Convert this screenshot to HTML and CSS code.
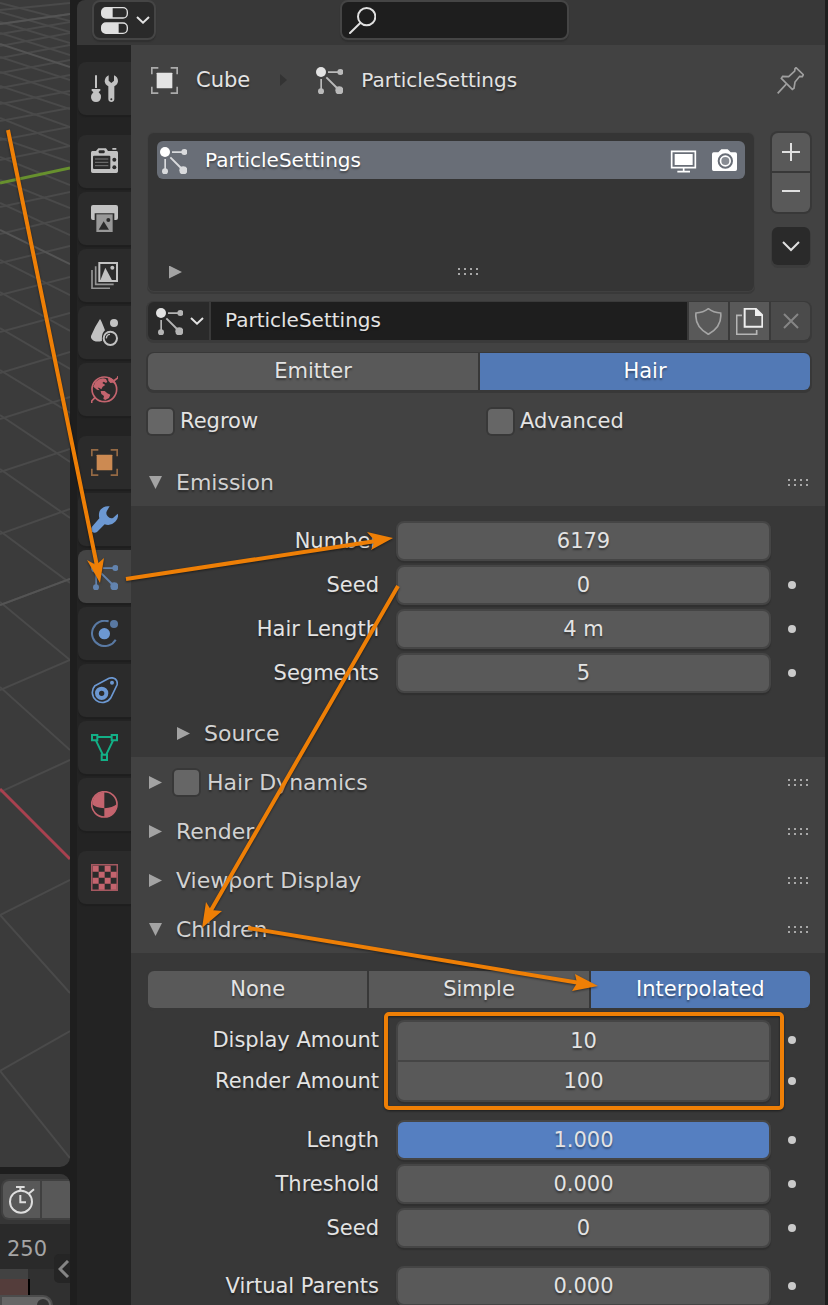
FILE: index.html
```html
<!DOCTYPE html>
<html lang="en">
<head>
<meta charset="utf-8">
<meta name="viewport" content="width=device-width, initial-scale=1">
<title>Particle properties</title>
<link rel="stylesheet" href="styles.css">
</head>
<body>
<svg class="defs" aria-hidden="true">
  <symbol id="i-object" viewBox="0 0 81 81"><path d="M2 22V2H22M59 2H79V22M79 59V79H59M22 79H2V59" fill="none" stroke="currentColor" stroke-width="6" opacity=".65"/><rect x="17" y="17" width="47" height="47" rx="2" fill="currentColor"/></symbol>
  <symbol id="i-particles" viewBox="0 0 81 81"><g fill="currentColor"><circle cx="15" cy="15" r="15"/><g opacity=".75"><circle cx="73" cy="15" r="9"/><circle cx="15" cy="73" r="9"/><circle cx="70" cy="70" r="12"/><path d="M36 13H66V18H36ZM13 36H18V66H13ZM29 33L33 29 65 61 61 65Z"/></g></g></symbol>
  <symbol id="i-chevron" viewBox="0 0 40 24"><path d="M2 3L20 20 38 3" fill="none" stroke="currentColor" stroke-width="6"/></symbol>
</svg>

<div class="app">
  <div class="left">
    <section class="viewport" aria-label="3D viewport">
      <svg width="70" height="1167" viewBox="0 0 70 1167" aria-hidden="true">
        <g fill="none" stroke="#4a4a4a" stroke-width="2">
          <path d="M0 10L70 3M0 24L70 14M0 34L70 22M0 46L70 33M0 58L70 45M0 73L70 60M0 88L70 75M0 104L70 91M0 121L70 108M0 140L70 127M0 160L70 146M0 207L70 192M0 234L70 217M0 263L70 246M0 295L70 277M0 332L70 313M0 373L70 352M0 419L70 397M0 472L70 449M0 534L70 509M0 605L70 579M0 690L70 660M0 792L70 760M0 915L70 880M0 1071L70 1031"/>
          <path d="M0 3L70 21M0 12L70 32M0 22L70 43M0 33L70 55M0 57L70 80M0 72L70 95M0 86L70 109M0 102L70 127M0 118L70 146M0 138L70 162M0 157L70 185M0 180L70 208M0 203L70 235M0 260L70 295M0 292L70 331M0 328L70 369M0 370L70 413M0 415L70 462M0 469L70 518M0 531L70 583M0 602L70 660M0 687L70 750M0 915L70 993M0 1071L70 1158"/>
        </g>
        <path d="M0 24L70 14M0 44L70 67M0 230L70 264M0 605L70 579" fill="none" stroke="#545454" stroke-width="2"/>
        <path d="M0 183L70 168" stroke="#67902e" stroke-width="3"/>
        <path d="M0 789L70 859" stroke="#a8414f" stroke-width="3"/>
      </svg>
    </section>
    <section class="timeline" aria-label="Timeline">
      <div class="timeline-head">
        <button class="clock" aria-label="Playback range"><svg width="27" height="28" viewBox="0 0 81 84"><g fill="none" stroke="#dedede" stroke-width="6"><circle cx="39" cy="47" r="33"/><path d="M24 3H50M37 3V14M61 24L78 10M37 27V49H54"/></g></svg></button>
        <button class="frame-field" aria-label="Start frame"></button>
      </div>
      <div class="scrub">250</div>
      <div class="track"><span class="range"></span></div>
      <div class="scrollbar"><span></span></div>
      <button class="side-tab" aria-label="Show sidebar"><svg width="12" height="18" viewBox="0 0 12 18"><path d="M10 1L2 9 10 17" fill="none" stroke="#858585" stroke-width="3"/></svg></button>
    </section>
  </div>

  <main class="editor">
    <header class="topbar">
      <button class="editor-type" aria-label="Editor type">
        <svg width="27" height="27" viewBox="0 0 81 81"><g fill="none" stroke="#e0e0e0" stroke-width="4"><rect x="2" y="2" width="77" height="31" rx="13"/><rect x="2" y="48" width="77" height="31" rx="13"/></g><path d="M15 2H35V33H15Q2 33 2 20V15Q2 2 15 2ZM15 48H53V79H15Q2 79 2 66V61Q2 48 15 48Z" fill="#e0e0e0"/></svg>
        <svg width="14" height="8"><use href="#i-chevron"/></svg>
      </button>
      <label class="search">
        <svg width="27" height="27" viewBox="0 0 81 81" aria-hidden="true"><circle cx="53" cy="29" r="26" fill="none" stroke="#e0e0e0" stroke-width="6"/><path d="M33 49L3 78" stroke="#e0e0e0" stroke-width="6" stroke-linecap="round"/></svg>
        <input type="text" aria-label="Search">
      </label>
    </header>

    <div class="workarea">
      <nav class="tabs" aria-label="Property tabs">
        <button class="tab gap-after" aria-label="Tool"><svg viewBox="0 0 81 81"><g fill="currentColor"><path d="M12 1H18V39H12ZM2 42H28V47L23 51H7L2 47Z"/><path d="M8 50H22Q31 58 30 67Q29 81 15 81Q1 81 0 67Q0 58 8 50Z"/><path d="M53 1V17L61 24 69 17V1Q81 6 81 19Q80 29 70 34V73Q69 81 61 81Q53 81 52 73V34Q42 29 41 19Q42 6 53 1Z"/></g><circle cx="61" cy="73" r="3" fill="#2b2b2b"/></svg></button>
        <button class="tab" aria-label="Render"><svg viewBox="0 0 81 81"><path d="M4 9H15L22 1H45L51 9H77Q81 9 81 14V70Q81 75 76 75H5Q0 75 0 70V14Q0 9 4 9ZM64 0H76V5H64Z" fill="currentColor"/><g fill="#2b2b2b"><rect x="23" y="7" width="18" height="9" rx="3"/><rect x="6" y="23" width="52" height="40" rx="3"/><circle cx="70" cy="35" r="6"/><circle cx="70" cy="58" r="6"/></g><path d="M12 33H52M12 43H52M12 53H52" stroke="currentColor" stroke-width="3" opacity=".5"/></svg></button>
        <button class="tab" aria-label="Output"><svg viewBox="0 0 81 81"><path d="M6 0H75Q81 0 81 6V39Q81 45 75 45H70V25H11V45H6Q0 45 0 39V6Q0 0 6 0Z" fill="currentColor"/><path d="M16 28H65V81H16Z" fill="currentColor" opacity=".72"/><circle cx="52" cy="45" r="6" fill="#2b2b2b"/><path d="M23 74L38 49 54 74Z" fill="#2b2b2b"/></svg></button>
        <button class="tab" aria-label="View layer"><svg viewBox="0 0 81 81"><g fill="none" stroke="currentColor"><rect x="25" y="3" width="53" height="54" stroke-width="6"/><path d="M14 13V67H68M3 24V79H57" stroke-width="5" opacity=".7"/></g><path d="M28 55L43 17 63 55Z" fill="currentColor"/><circle cx="64" cy="17" r="6" fill="currentColor"/></svg></button>
        <button class="tab" aria-label="Scene"><svg viewBox="0 0 81 81"><path d="M27 0Q30 2 42 34Q31 43 33 65Q21 70 8 65Q-2 60 0 51Q12 22 27 0Z" fill="currentColor"/><circle cx="69" cy="12" r="12" fill="currentColor"/><circle cx="58" cy="58" r="20" fill="none" stroke="currentColor" stroke-width="6"/><path d="M46 58Q47 46 57 46" fill="none" stroke="currentColor" stroke-width="4"/></svg></button>
        <button class="tab red gap-after" aria-label="World"><svg viewBox="0 0 81 81"><g fill="none" stroke="currentColor" stroke-width="5"><circle cx="40" cy="40" r="37"/><path d="M2 81V75L12 65M81 0V5L68 15"/></g><path d="M13 18Q29 2 45 9L49 17 45 21 38 17 34 21 43 27 35 32 31 40 24 35 20 35 26 43 18 41 7 32ZM29 45H41L49 52 58 56 54 66 43 72 37 69 39 60 31 54ZM51 2Q72 7 76 29L66 20 58 21 52 14Z" fill="currentColor"/></svg></button>
        <button class="tab orange" aria-label="Object"><svg><use href="#i-object"/></svg></button>
        <button class="tab blue" aria-label="Modifiers"><svg viewBox="0 0 81 81"><path d="M56 1Q36-2 26 15Q22 25 25 37L3 62Q-2 69 3 77Q10 83 18 78L41 55Q60 61 74 46Q84 34 80 23L67 35Q58 40 50 31Q43 23 48 14Z" fill="currentColor"/></svg></button>
        <button class="tab blue active" aria-label="Particles"><svg><use href="#i-particles"/></svg></button>
        <button class="tab blue" aria-label="Physics"><svg viewBox="0 0 81 81"><circle cx="40" cy="41" r="17" fill="currentColor"/><g opacity=".72"><circle cx="69" cy="12" r="12" fill="currentColor"/><path d="M53 4A38 38 0 1 0 74 59" fill="none" stroke="currentColor" stroke-width="6"/></g></svg></button>
        <button class="tab blue" aria-label="Constraints"><svg viewBox="0 0 81 81"><g fill="none" stroke="currentColor"><circle cx="32" cy="49" r="14" stroke-width="12"/><path d="M12 26L54 4Q65 0 73 6Q81 13 78 24L59 63A30 30 0 1 1 12 26Z" stroke-width="5"/></g><circle cx="63" cy="17" r="6" fill="currentColor"/></svg></button>
        <button class="tab green" aria-label="Object data"><svg viewBox="0 0 81 81"><path d="M3 3H19V19H3ZM62 3H78V19H62ZM32 62H48V78H32ZM20 9H61M15 20L35 61M66 20L46 61" fill="none" stroke="currentColor" stroke-width="6"/></svg></button>
        <button class="tab red gap-after" aria-label="Material"><svg viewBox="0 0 81 81"><circle cx="40" cy="40" r="38" fill="none" stroke="currentColor" stroke-width="5"/><path d="M40 2V52Q13 50 4 40Q4 8 40 2ZM40 52Q65 50 77 40Q75 75 40 79Z" fill="currentColor"/></svg></button>
        <button class="tab red" aria-label="Texture"><svg viewBox="0 0 81 81"><rect x="2" y="2" width="77" height="77" fill="none" stroke="currentColor" stroke-width="5" opacity=".8"/><path d="M5 5H23V23H5ZM41 5H59V23H41ZM23 23H41V41H23ZM59 23H77V41H59ZM5 41H23V59H5ZM41 41H59V59H41ZM23 59H41V77H23ZM59 59H77V77H59Z" fill="currentColor"/></svg></button>
      </nav>

      <div class="panels">
        <div class="crumbs">
          <svg class="icon"><use href="#i-object"/></svg><span class="crumb-name">Cube</span>
          <span class="crumb-sep"></span>
          <svg class="icon"><use href="#i-particles"/></svg><span class="crumb-name name">ParticleSettings</span>
          <button class="pin" aria-label="Pin"><svg class="icon" viewBox="0 0 81 81"><path d="M57 2L79 23 76 29 68 28 54 45 51 64 46 67 13 34 17 28 35 29 53 12 54 5ZM27 52L2 79" fill="none" stroke="#a0a0a0" stroke-width="5"/></svg></button>
        </div>

        <section class="slots">
          <div class="slot-list">
            <div class="slot">
              <svg class="icon"><use href="#i-particles"/></svg><span class="slot-name name">ParticleSettings</span>
              <button aria-label="Show in viewport"><svg class="icon" viewBox="0 0 81 81"><path d="M5 13H76V62H5ZM41 64V71M22 74H60" fill="none" stroke="currentColor" stroke-width="5"/><rect x="14" y="21" width="54" height="33" fill="currentColor"/></svg></button>
              <button aria-label="Show in render"><svg class="icon" viewBox="0 0 81 81"><path d="M8 16H22L31 7H50L59 16H73Q78 16 78 21V67Q78 72 73 72H8Q3 72 3 67V21Q3 16 8 16Z" fill="currentColor"/><circle cx="43" cy="42" r="20" fill="none" stroke="#696e77" stroke-width="6"/><circle cx="43" cy="42" r="12" fill="#696e77" fill-opacity=".8"/></svg></button>
            </div>
            <div class="slot-foot"><button class="tri right" aria-label="Filter"></button><span class="grip"></span></div>
          </div>
          <div class="slot-tools">
            <button class="add" aria-label="Add slot"><svg width="18" height="18"><path d="M9 0V18M0 9H18" stroke="#e0e0e0" stroke-width="2"/></svg></button>
            <button class="remove" aria-label="Remove slot"><svg width="18" height="18"><path d="M0 9H18" stroke="#e0e0e0" stroke-width="2"/></svg></button>
            <button class="specials" aria-label="Specials"><svg width="18" height="12" viewBox="0 0 18 12"><path d="M1 2L9 10 17 2" fill="none" stroke="#e0e0e0" stroke-width="2"/></svg></button>
          </div>
        </section>

        <div class="datablock">
          <button class="browse" aria-label="Browse settings"><svg class="icon"><use href="#i-particles"/></svg><svg width="14" height="8"><use href="#i-chevron"/></svg></button>
          <input class="name" type="text" value="ParticleSettings" aria-label="Settings name">
          <button aria-label="Fake user"><svg class="icon" viewBox="0 0 81 81"><path d="M40 2Q55 14 77 15Q82 56 40 79Q-2 56 3 15Q25 14 40 2Z" fill="none" stroke="#a5a5a5" stroke-width="5"/></svg></button>
          <button aria-label="New copy"><svg class="icon" viewBox="0 0 81 81"><path d="M18 22H2V79H62V66" fill="none" stroke="#b5b5b5" stroke-width="5"/><path d="M26 2H59L79 22V56H26Z" fill="none" stroke="#eee" stroke-width="6"/><path d="M57 0L81 24H57Z" fill="#eee"/></svg></button>
          <button class="unlink" aria-label="Unlink"><svg width="18" height="18"><path d="M2 2L16 16M16 2L2 16" stroke="#858585" stroke-width="2"/></svg></button>
        </div>

        <div class="choice two">
          <button>Emitter</button><button class="on">Hair</button>
        </div>
        <div class="checks">
          <label><input type="checkbox"><span>Regrow</span></label>
          <label><input type="checkbox"><span>Advanced</span></label>
        </div>

        <section>
          <div class="panel-head"><button><span class="tri down"></span>Emission</button><span class="grip"></span></div>
          <div class="panel-body emission">
            <div class="rows">
              <div class="row"><label for="number">Number</label><input id="number" type="text" value="6179"></div>
              <div class="row"><label for="seed">Seed</label><input id="seed" type="text" value="0"><button class="dot" aria-label="Animate Seed"></button></div>
              <div class="row"><label for="hair-length">Hair Length</label><input id="hair-length" type="text" value="4 m"><button class="dot" aria-label="Animate Hair Length"></button></div>
              <div class="row"><label for="segments">Segments</label><input id="segments" type="text" value="5"><button class="dot" aria-label="Animate Segments"></button></div>
            </div>
            <div class="panel-head sub"><button><span class="tri right"></span>Source</button></div>
          </div>
        </section>
        <section class="panel-head"><button aria-label="Expand Hair Dynamics"><span class="tri right"></span></button><label class="head-check"><input type="checkbox"><span>Hair Dynamics</span></label><span class="grip"></span></section>
        <section class="panel-head"><button><span class="tri right"></span>Render</button><span class="grip"></span></section>
        <section class="panel-head"><button><span class="tri right"></span>Viewport Display</button><span class="grip"></span></section>
        <section>
          <div class="panel-head"><button><span class="tri down"></span>Children</button><span class="grip"></span></div>
          <div class="panel-body children">
            <div class="choice three">
              <button>None</button><button>Simple</button><button class="on">Interpolated</button>
            </div>
            <div class="rows joined">
              <div class="row"><label for="display-amount">Display Amount</label><input id="display-amount" type="text" value="10"><button class="dot" aria-label="Animate Display Amount"></button></div>
              <div class="row"><label for="render-amount">Render Amount</label><input id="render-amount" type="text" value="100"><button class="dot" aria-label="Animate Render Amount"></button></div>
            </div>
            <div class="rows">
              <div class="row"><label for="length">Length</label><input id="length" class="full" type="text" value="1.000"><button class="dot" aria-label="Animate Length"></button></div>
              <div class="row"><label for="threshold">Threshold</label><input id="threshold" type="text" value="0.000"><button class="dot" aria-label="Animate Threshold"></button></div>
              <div class="row"><label for="child-seed">Seed</label><input id="child-seed" type="text" value="0"><button class="dot" aria-label="Animate child Seed"></button></div>
            </div>
            <div class="rows">
              <div class="row"><label for="virtual-parents">Virtual Parents</label><input id="virtual-parents" type="text" value="0.000"><button class="dot" aria-label="Animate Virtual Parents"></button></div>
            </div>
          </div>
        </section>
      </div>
    </div>
  </main>

  <svg class="annotations" width="828" height="1305" viewBox="0 0 828 1305" aria-hidden="true">
    <g stroke="#ee7f06" stroke-width="4" fill="none">
      <path d="M8 130L97 566M126 579L376 541M398 586L210 912M248 928L580 983"/>
      <rect x="386" y="1014" width="396" height="94" rx="3"/>
    </g>
    <path d="M100 583L87 560 96 565 104 558ZM393 538L371 550 375 541 367 532ZM202 928L206 902 211 910 222 911ZM598 986L572 991 577 983 575 974Z" fill="#ee7f06"/>
  </svg>
</div>
</body>
</html>
```

FILE: styles.css
```css
* { box-sizing: border-box; }

body {
  margin: 0;
  background: #1e1e1e;
  color: #e3e3e3;
  font: 21px/26px "DejaVu Sans", sans-serif;
}

button, input { font: inherit; color: inherit; }
button { padding: 0; border: 0; background: none; }
svg { display: block; flex: none; }
.defs { position: absolute; width: 0; height: 0; }
.icon { width: 27px; height: 27px; }

.app {
  position: relative;
  display: flex;
  gap: 7px;
  height: 100vh;
  padding-right: 3px;
  overflow: hidden;
}

.annotations {
  position: absolute;
  top: 0;
  left: 0;
  pointer-events: none;
  filter: drop-shadow(0 1px 1px rgba(0, 0, 0, .5));
}

/* Viewport and timeline */
.left { flex: 0 0 70px; display: flex; flex-direction: column; gap: 7px; }
.viewport { flex: 1; min-height: 0; overflow: hidden; background: #3b3b3b; border-radius: 0 0 10px 0; }
.timeline {
  position: relative;
  flex: 0 0 131px;
  overflow: hidden;
  background: #303030;
  border-radius: 0 10px 0 0;
}
.timeline-head { display: flex; gap: 2px; height: 50px; padding: 7px 0 6px 3px; background: #363636; }
.timeline-head button { background: #585858; box-shadow: 0 0 0 2px #404040; }
.clock { width: 37px; display: grid; place-items: center; border-radius: 6px 0 0 6px; }
.frame-field { flex: 1; }
.scrub { height: 45px; padding: 12px 0 0 7px; background: #2a2a2a; color: #a5a5a5; }
.track { height: 26px; padding-top: 10px; background: linear-gradient(#424242, #424242) 0 0 / 28px 100% no-repeat #303030; }
.range { display: block; width: 30px; height: 16px; background: #543d3b; border-right: 2px solid #000; }
.scrollbar { width: 53px; height: 20px; background: #666; border: 2px solid #4c4c4c; border-radius: 0 10px 10px 0; }
.scrollbar span { display: block; width: 12px; height: 12px; margin: 2px 0 0 35px; border-radius: 6px; background: #333; }
.side-tab {
  position: absolute;
  right: 0;
  top: 80px;
  width: 16px;
  height: 29px;
  display: grid;
  place-items: center end;
  background: #252525;
  border-radius: 5px 0 0 5px;
}

/* Editor header */
.editor { flex: 1; min-width: 0; display: flex; flex-direction: column; }
.topbar {
  display: flex;
  gap: 184px;
  flex: 0 0 45px;
  padding: 0 15px;
  background: #383838;
  border-radius: 8px 0 0 0;
}
.editor-type, .search {
  height: 40px;
  border: 2px solid #454545;
  border-radius: 8px;
  display: flex;
  align-items: center;
  box-shadow: 0 2px 1px #303030;
}
.editor-type { width: 64px; gap: 8px; padding-left: 7px; background: #2a2a2a; }
.search { width: 229px; padding-left: 7px; background: #1e1e1e; }
.search input { flex: 1; min-width: 0; border: 0; outline: 0; background: none; }

/* Tabs */
.workarea { flex: 1; min-height: 0; display: flex; }
.tabs { flex: 0 0 54px; display: flex; flex-direction: column; gap: 4px; padding: 17px 0 0 1px; background: #232323; }
.tab {
  flex: 0 0 53px;
  padding-left: 13px;
  background: #2b2b2b;
  border-radius: 8px 0 0 8px;
  box-shadow: 0 2px 1px #1f1f1f;
  color: #c2c2c2;
}
.tab svg { width: 27px; height: 27px; }
.gap-after { margin-bottom: 16px; }
.tab.active { background: #444; }
.red { color: #c4646e; }
.orange { color: #cc8a52; }
.blue { color: #6c98d2; }
.green { color: #13b087; }

/* Panels */
.panels {
  flex: 1;
  min-width: 0;
  background: #424242;
  text-shadow: 0 2px 2px rgba(0, 0, 0, .4);
}
.name { font-size: 20px; }
.crumbs { display: flex; align-items: center; height: 70px; padding: 0 21px 0 20px; }
.crumb-name { margin-left: 18px; }
.crumb-sep {
  margin: 0 29px 0 30px;
  border: solid transparent;
  border-width: 6px 0 6px 7px;
  border-left-color: #333;
}
.pin { margin-left: auto; }

.slots { display: flex; gap: 18px; margin: 18px 15px 0 17px; }
.slot-list {
  flex: 1;
  height: 158px;
  padding: 8px 9px;
  display: flex;
  flex-direction: column;
  background: #353535;
  border-radius: 6px;
  box-shadow: 0 0 0 1px #404040, 0 2px 0 1px #393939;
}
.slot {
  display: flex;
  align-items: center;
  height: 38px;
  padding: 0 7px 0 3px;
  background: #696e77;
  border-radius: 6px;
  color: #fff;
}
.slot-name { flex: 1; margin-left: 18px; }
.slot button + button { margin-left: 14px; }
.slot-foot { margin-top: auto; height: 22px; display: grid; grid-template-columns: 1fr auto 1fr; align-items: center; padding-left: 12px; }
.slot-foot .grip { margin-left: 24px; }

.slot-tools { width: 38px; display: flex; flex-direction: column; }
.slot-tools button { height: 38px; display: grid; place-items: center; background: #595959; box-shadow: 0 0 0 2px #383838; }
.slot-tools .add { border-radius: 6px 6px 0 0; }
.slot-tools .remove { height: 39px; margin-top: 2px; padding-bottom: 3px; border-radius: 0 0 6px 6px; }
.slot-tools .specials { margin-top: 15px; background: #2a2a2a; border-radius: 6px; box-shadow: 0 2px 0 1px #3c3c3c; }

.datablock { display: flex; gap: 2px; height: 38px; margin: 11px 15px 0 17px; background: #3a3a3a; border-radius: 6px; box-shadow: 0 1px 0 2px #3a3a3a; }
.datablock button { flex: 0 0 39px; display: grid; place-items: center; background: #595959; }
.datablock .browse { flex-basis: 61px; display: flex; align-items: center; gap: 7px; padding-left: 8px; background: #2a2a2a; border-radius: 6px 0 0 6px; }
.datablock input { flex: 1; min-width: 0; padding: 0 14px 2px; border: 0; background: #1e1e1e; text-shadow: inherit; }
.datablock .unlink { background: #4b4b4b; border-radius: 0 6px 6px 0; }

.choice { display: grid; gap: 2px; height: 37px; background: #383838; border-radius: 6px; box-shadow: 0 1px 0 2px #383838; }
.choice button { padding-bottom: 2px; background: #595959; text-shadow: inherit; }
.choice button:first-child { border-radius: 6px 0 0 6px; }
.choice button:last-child { border-radius: 0 6px 6px 0; }
.choice .on { background: #5279b5; color: #fff; }
.two { grid-template-columns: 1fr 1fr; margin: 13px 15px 0 17px; }
.three { grid-template-columns: 1fr 1fr 1fr; margin-bottom: 12px; }

input[type="checkbox"] {
  appearance: none;
  flex: none;
  width: 25px;
  height: 25px;
  margin: 0;
  background: #666;
  border-radius: 4px;
  box-shadow: 0 0 0 2px #383838;
}
.checks { display: grid; grid-template-columns: 340px 1fr; margin: 17px 15px 0 17px; height: 50px; }
.checks label, .head-check { display: flex; gap: 7px; }
.checks label { height: 28px; align-items: center; }

.panel-head { display: flex; align-items: center; height: 49px; padding: 2px 15px 0 18px; color: #d2d2d2; font-size: 22px; }
.panel-head button { display: flex; align-items: center; gap: 14px; text-shadow: inherit; }
.panel-head .grip { margin-left: auto; }
.panel-head.sub { padding-left: 46px; }
.head-check { margin-left: 12px; }
.head-check span { margin-left: 1px; }
.tri { width: 13px; height: 13px; background: #a3a3a3; }
.tri.right { clip-path: polygon(0 0, 100% 50%, 0 100%); }
.tri.down { clip-path: polygon(0 0, 100% 0, 50% 100%); }
.grip {
  width: 22px;
  height: 8px;
  background: repeating-linear-gradient(90deg, #a8a8a8 0 2px, transparent 2px 6px);
  mask: linear-gradient(#000 2px, transparent 2px 5px, #000 5px 7px, transparent 7px);
}

.panel-body { padding: 15px 15px 0 17px; background: #383838; }
.emission .rows { margin-bottom: 15px; }
.emission .sub { margin-left: -17px; }
.children { padding-top: 18px; }
.rows { display: grid; gap: 4px; }
.children .rows { margin-bottom: 18px; }
.row { display: grid; grid-template-columns: minmax(0, 231fr) minmax(0, 375fr) 22px; gap: 17px; align-items: center; }
.row label { text-align: right; white-space: nowrap; }
.row input {
  width: 100%;
  height: 40px;
  padding: 0 0 1px;
  border: 2px solid #454545;
  border-radius: 8px;
  background: #595959;
  box-shadow: 0 2px 1px #303030;
  text-align: center;
  text-shadow: inherit;
}
.row .full { background: #557fc1; }
.joined { gap: 0; }
.joined .row:first-child input { border-radius: 8px 8px 0 0; border-bottom: 0; box-shadow: none; }
.joined .row:last-child input { height: 42px; border-radius: 0 0 8px 8px; }
.dot { width: 8px; height: 8px; border-radius: 4px; background: #cacaca; }
```
